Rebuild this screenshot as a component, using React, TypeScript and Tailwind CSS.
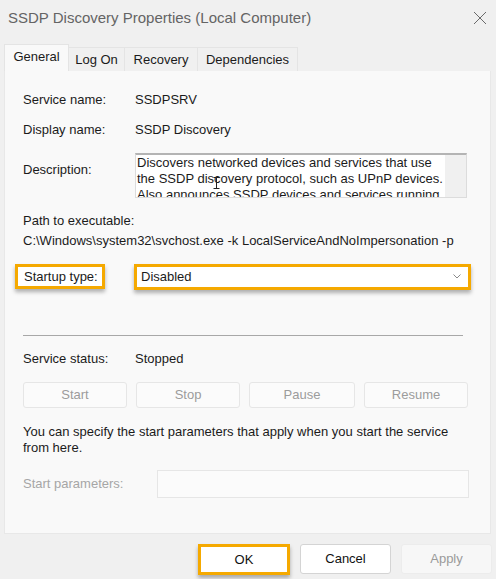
const font = { fontFamily: '"Liberation Sans", Arial, sans-serif' };

const Field = ({ label, value }: { label: string; value: string }) => (
  <div className="flex h-[20px] items-center text-[13px] text-[#1b1b1b]">
    <span className="w-[112px]">{label}</span>
    <span>{value}</span>
  </div>
);

const DisabledButton = ({ label, w }: { label: string; w: string }) => (
  <div
    className={`${w} flex h-[26px] items-center justify-center rounded-[3px] border border-[#e6e6e6] bg-[#fbfbfb] text-[13px] text-[#9c9c9c]`}
  >
    {label}
  </div>
);

export default function App() {
  return (
    <div className="h-[579px] w-[496px] overflow-hidden bg-[#f0f0f0]" style={font}>
      {/* title bar */}
      <div className="flex h-[36px] items-center justify-between pl-[8px] pr-[8px]">
        <span className="text-[15px] text-[#646464]">SSDP Discovery Properties (Local Computer)</span>
        <svg width="14" height="14" viewBox="0 0 14 14" className="mr-[1px]">
          <path d="M1 1 L13 13 M13 1 L1 13" stroke="#6a6a6a" strokeWidth="1" />
        </svg>
      </div>

      {/* tabs */}
      <div className="ml-[4px] mt-[9px] flex h-[26px] items-end text-[13px] text-[#1b1b1b]">
        <div className="flex h-[27px] w-[65px] items-center justify-center border border-b-0 border-[#e4e4e4] bg-[#f9f9f9] pb-[2px]">
          General
        </div>
        <div className="flex h-[24px] w-[56px] items-center justify-center border-r border-t border-[#e4e4e4] bg-[#f0f0f0]">
          Log On
        </div>
        <div className="flex h-[24px] w-[73px] items-center justify-center border-r border-t border-[#e4e4e4] bg-[#f0f0f0]">
          Recovery
        </div>
        <div className="flex h-[24px] w-[100px] items-center justify-center border-r border-t border-[#e4e4e4] bg-[#f0f0f0]">
          Dependencies
        </div>
      </div>

      {/* panel */}
      <div className="ml-[4px] flex h-[463px] w-[487px] flex-col border border-t-0 border-[#e8e8e8] bg-[#f9f9f9] pl-[18px] pt-[19px]">
        <Field label="Service name:" value="SSDPSRV" />
        <div className="mt-[10px]">
          <Field label="Display name:" value="SSDP Discovery" />
        </div>

        <div className="mt-[13px] flex h-[45px] text-[13px] text-[#1b1b1b]">
          <span className="w-[112px] pt-[7px]">Description:</span>
          <div className="relative flex h-[45px] w-[332px] overflow-hidden border border-t-2 border-[#dcdcdc] border-t-[#b4b4b4] bg-white">
            <div className="flex-1 pl-[1px] leading-[16px]">
              <p>Discovers networked devices and services that use</p>
              <p>the SSDP discovery protocol, such as UPnP devices.</p>
              <p>Also announces SSDP devices and services running</p>
            </div>
            <div className="w-[21px] bg-[#f0f0f0]" />
            <svg
              width="7"
              height="12"
              viewBox="0 0 7 12"
              className="absolute left-[77px] top-[22px]"
            >
              <path d="M0.5 0.5 H6.5 M3.5 0.5 V11.5 M0.5 11.5 H6.5" stroke="#222" strokeWidth="1" fill="none" />
            </svg>
          </div>
        </div>

        <div className="mt-[13px] flex h-[20px] items-center text-[13px] text-[#1b1b1b]">Path to executable:</div>
        <div className="flex h-[20px] items-center text-[13px] text-[#1b1b1b]">
          C:\Windows\system32\svchost.exe -k LocalServiceAndNoImpersonation -p
        </div>

        <div className="mt-[13px] flex h-[25px] items-center text-[13px] text-[#1b1b1b]">
          <div className="-ml-[8px] flex h-[25px] w-[90px] items-center border-[3px] border-[#f5a900] bg-white pl-[6px] shadow-[0_3px_4px_rgba(0,0,0,0.3)]">
            Startup type:
          </div>
          <div className="ml-[29px] flex h-[26px] w-[337px] items-center justify-between border-[3px] border-[#f5a900] bg-white pl-[4px] pr-[7px] shadow-[0_3px_4px_rgba(0,0,0,0.3)]">
            <span>Disabled</span>
            <svg width="8" height="5" viewBox="0 0 8 5">
              <path d="M0.5 0.5 L4 4 L7.5 0.5" stroke="#8a8a8a" strokeWidth="1" fill="none" />
            </svg>
          </div>
        </div>

        <div className="mt-[46px] h-px w-[440px] bg-[#a8a8a8]" />

        <div className="mt-[13px]">
          <Field label="Service status:" value="Stopped" />
        </div>

        <div className="mt-[13px] flex w-[445px] justify-between">
          <DisabledButton label="Start" w="w-[104px]" />
          <DisabledButton label="Stop" w="w-[104px]" />
          <DisabledButton label="Pause" w="w-[106px]" />
          <DisabledButton label="Resume" w="w-[104px]" />
        </div>

        <div className="mt-[16px] text-[13px] leading-[16px] text-[#1b1b1b]">
          <p>You can specify the start parameters that apply when you start the service</p>
          <p>from here.</p>
        </div>

        <div className="mt-[14px] flex h-[28px] items-center text-[13px] text-[#a6a6a6]">
          <span className="w-[134px]">Start parameters:</span>
          <div className="h-[28px] w-[312px] border border-[#e6e6e6] bg-[#fbfbfb]" />
        </div>
      </div>

      {/* dialog buttons */}
      <div className="mt-[10px] flex justify-end gap-[10px] pr-[4px] text-[13px]">
        <div className="flex h-[31px] w-[92px] items-center justify-center border-[3px] border-[#f5a900] bg-white text-[#111] shadow-[0_3px_4px_rgba(0,0,0,0.3)]">
          OK
        </div>
        <div className="flex h-[30px] w-[91px] items-center justify-center rounded-[3px] border border-[#d4d4d4] bg-white text-[#111]">
          Cancel
        </div>
        <div className="flex h-[30px] w-[91px] items-center justify-center rounded-[3px] border border-[#ececec] bg-[#f7f7f7] text-[#9a9a9a]">
          Apply
        </div>
      </div>
    </div>
  );
}
